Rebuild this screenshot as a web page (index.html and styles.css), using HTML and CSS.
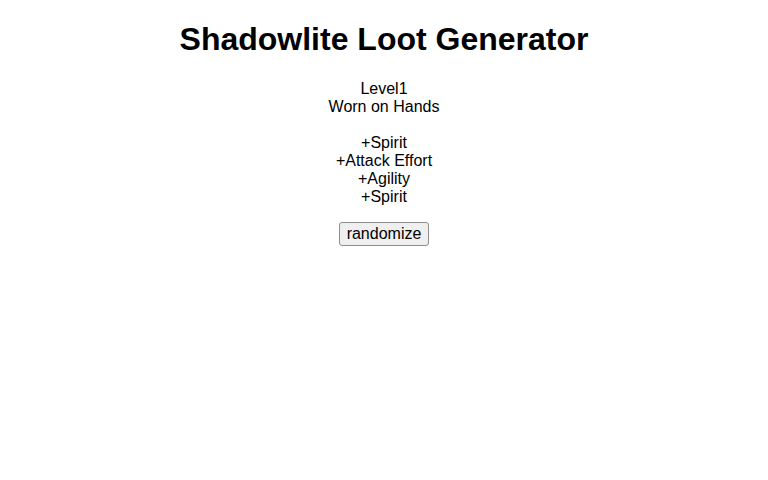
FILE: index.html
```html
<!DOCTYPE html>
<html lang="en">
<head>
    <meta charset="UTF-8">
    <meta name="viewport" content="width=device-width, initial-scale=1.0">
    <title>Shadowlite Loot Generator</title>
    <link rel="stylesheet" href="styles.css">
</head>
<body>
    <h1>Shadowlite Loot Generator</h1>

    <div class="loot" id="loot">
        <div class="item-info">
            <div id="level">Level1</div>
            <div id="slot">Worn on Hands</div>
        </div>
        <div class="stats" id="stats">
            <div>+Spirit</div>
            <div>+Attack Effort</div>
            <div>+Agility</div>
            <div>+Spirit</div>
        </div>
    </div>

    <p class="controls">
        <button id="randomize">randomize</button>
    </p>
</body>
</html>
```

FILE: styles.css
```css
body {
    font-family: "Liberation Sans", Arial, sans-serif;
    text-align: center;
    color: #000;
    background: #fff;
    margin: 0 8px;
}

h1 {
    font-size: 32px;
    margin: 21px 0 22px;
}

.loot {
    font-size: 16px;
}

.stats {
    margin-top: 18px;
}

.controls {
    margin: 16px 0;
}

button {
    font-family: "Liberation Sans", Arial, sans-serif;
    font-size: 16px;
    line-height: 18px;
    padding: 2px 7px;
    background: #efefef;
    color: #000;
    border: 1px solid #8f8f8f;
    border-radius: 3px;
}
```
